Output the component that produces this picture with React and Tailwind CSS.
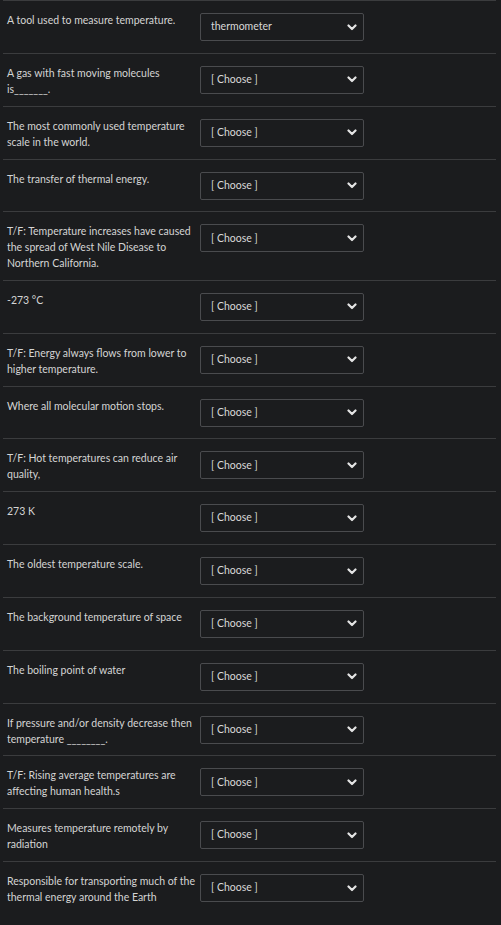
import React from "react";

const questions = [
    { q: "A tool used to measure temperature.", a: "thermometer" },
    { q: "A gas with fast moving molecules is_______." },
    { q: "The most commonly used temperature scale in the world." },
    { q: "The transfer of thermal energy." },
    { q: "T/F: Temperature increases have caused the spread of West Nile Disease to Northern California." },
    { q: "-273 \u00B0C" },
    { q: "T/F: Energy always flows from lower to higher temperature." },
    { q: "Where all molecular motion stops." },
    { q: "T/F: Hot temperatures can reduce air quality," },
    { q: "273 K" },
    { q: "The oldest temperature scale." },
    { q: "The background temperature of space" },
    { q: "The boiling point of water" },
    { q: "If pressure and/or density decrease then temperature ________." },
    { q: "T/F: Rising average temperatures are affecting human health.s" },
    { q: "Measures temperature remotely by radiation" },
    { q: "Responsible for transporting much of the thermal energy around the Earth" },
];

const Chevron = () => (
    <svg width="10" height="7" viewBox="0 0 10 7" className="text-[#e4e4e4]">
        <polyline points="1.5,1.5 5,5 8.5,1.5" fill="none" stroke="currentColor" strokeWidth="2.2" strokeLinecap="round" strokeLinejoin="round" />
    </svg>
);

const Row = ({ q, a, last }) => (
    <div className={"flex items-start " + (last ? "" : "border-b border-[#3b3c3e]")}>
        <p className="w-[196px] shrink-0 pl-[4px] pr-[3px] pt-[11px] pb-[8.5px] text-[10.5px] leading-[16px] text-[#d4d4d4]">
            {q}
        </p>
        <div className="mt-[12px] mb-[11.85px] ml-[1px] flex h-[28px] w-[164px] items-center justify-between rounded-[2px] border border-[#4a4b4e] pl-[10px] pr-[6px]">
            <span className="text-[10.5px] text-[#d8d8d8]">{a || "[ Choose ]"}</span>
            <Chevron />
        </div>
    </div>
);

export default function App() {
    return (
        <div className="min-h-[925px] w-[501px] bg-[#1b1c1e] pl-[3px]" style={{ fontFamily: "Lato, 'Open Sans', sans-serif" }}>
            <div className="w-[493px] border-t border-[#3b3c3e]">
                {questions.map((item, i) => (
                    <Row key={i} {...item} last={i === questions.length - 1} />
                ))}
            </div>
        </div>
    );
}
